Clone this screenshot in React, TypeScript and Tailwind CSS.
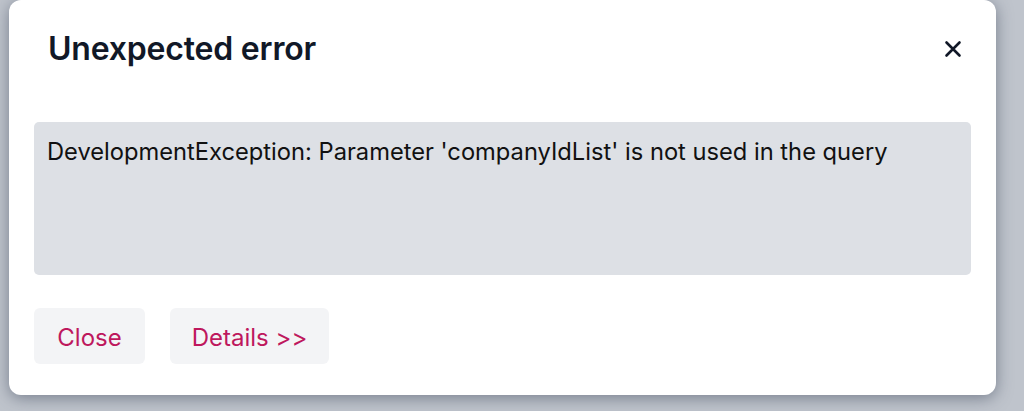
import React from "react";

export default function App() {
  return (
    <div
      className="w-[1024px] h-[411px] overflow-hidden bg-[#bfc4cc] pl-[9px] pr-[28px] pb-[16px]"
      style={{ fontFamily: "Inter, 'Noto Sans', sans-serif" }}
    >
      <div className="h-[395px] w-full rounded-xl bg-white shadow-[0_3px_16px_rgba(60,70,90,0.55)] px-[25px] flex flex-col">
        <div className="flex items-center justify-between h-[100px] pb-[2px]">
          <h1 className="pl-[14px] text-[32px] leading-[40px] font-semibold text-[#111827] tracking-[-0.2px]">
            Unexpected error
          </h1>
          <button className="mr-[9px] text-[#111827]" aria-label="Close">
            <svg width="18" height="18" viewBox="0 0 18 18" fill="none">
              <path d="M2.5 2.5L15.5 15.5M15.5 2.5L2.5 15.5" stroke="currentColor" strokeWidth="2.6" strokeLinecap="round" />
            </svg>
          </button>
        </div>
        <div className="mt-[22px] h-[153px] rounded-[5px] bg-[#dde0e5] px-[13px] pt-[14px] text-[23.7px] leading-[32px] text-[#111111]">
          DevelopmentException: Parameter 'companyIdList' is not used in the query
        </div>
        <div className="mt-[33px] flex gap-[25px]">
          <button className="h-[56px] w-[111px] rounded-[6px] bg-[#f3f4f6] pt-[3px] text-[24px] text-[#be185d]">
            Close
          </button>
          <button className="h-[56px] w-[159px] rounded-[6px] bg-[#f3f4f6] pt-[3px] text-[24px] text-[#be185d]">
            Details &gt;&gt;
          </button>
        </div>
      </div>
    </div>
  );
}
